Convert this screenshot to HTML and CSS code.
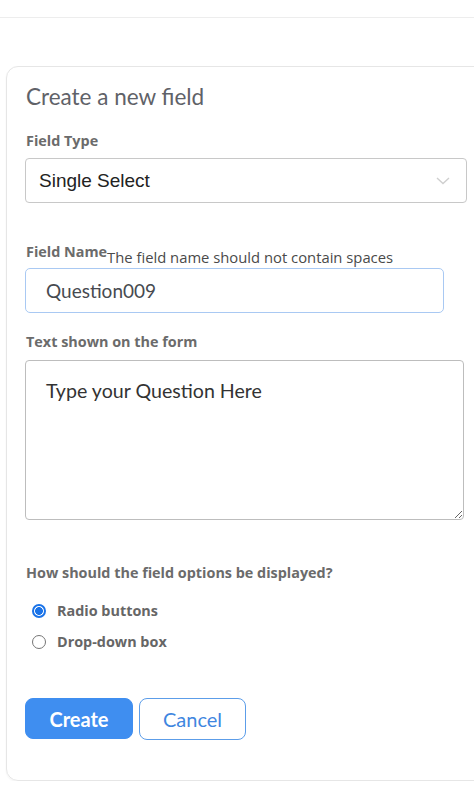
FILE: index.html
```html
<!DOCTYPE html>
<html lang="en">
<head>
<meta charset="utf-8">
<title>Create a new field</title>
<link rel="stylesheet" href="styles.css">
</head>
<body>
<div class="topbar"></div>
<div class="card">
  <h2 class="title">Create a new field</h2>

  <div class="label first">Field Type</div>
  <div class="select">
    <span class="select-value">Single Select</span>
    <svg class="chevron" width="14" height="8" viewBox="0 0 14 8"><path d="M1 1 L7 6.5 L13 1" fill="none" stroke="#cfcfcf" stroke-width="1.4"/></svg>
  </div>

  <div class="name-row">
    <span class="label">Field Name</span><span class="hint">The field name should not contain spaces</span>
  </div>
  <input class="text-input" type="text" value="Question009">

  <div class="label text-label">Text shown on the form</div>
  <textarea class="textarea">Type your Question Here</textarea>

  <div class="label display-label">How should the field options be displayed?</div>
  <div class="radios">
    <div class="radio-row"><span class="radio checked"></span><span class="radio-text">Radio buttons</span></div>
    <div class="radio-row"><span class="radio"></span><span class="radio-text">Drop-down box</span></div>
  </div>

  <div class="actions">
    <button class="btn btn-primary">Create</button>
    <button class="btn btn-outline">Cancel</button>
  </div>
</div>
</body>
</html>
```

FILE: styles.css
```css
* { box-sizing: border-box; }
html, body { margin: 0; padding: 0; background: #fff; }
body {
  font-family: "Open Sans", Lato, sans-serif;
  color: #333;
  width: 474px;
  overflow: hidden;
}
.topbar {
  height: 18px;
  border-bottom: 1px solid #ededed;
}
.card {
  margin: 48px 0 0 6px;
  width: 490px;
  border: 1px solid #e6e6e6;
  border-radius: 12px;
  padding: 17px 18px 40px 18px;
  box-shadow: 0 1px 2px rgba(0,0,0,0.05);
}
.title {
  margin: 0;
  font-family: Lato, "Open Sans", sans-serif;
  font-size: 22.5px;
  line-height: 26px;
  font-weight: 400;
  color: #5f6268;
  padding-left: 1px;
}
.label {
  font-size: 14.4px;
  line-height: 18px;
  font-weight: 700;
  color: #6b6b6b;
  padding-left: 1px;
}
.label.first { margin-top: 22px; }
.select {
  margin-top: 8px;
  width: 442px;
  height: 45px;
  border: 1px solid #c8c8c8;
  border-radius: 4px;
  display: flex;
  align-items: center;
  justify-content: space-between;
  padding: 0 16px 0 13px;
}
.select-value {
  font-family: "Liberation Sans", Arial, sans-serif;
  font-size: 19px;
  color: #222;
}
.chevron { display: block; }
.name-row {
  margin-top: 40px;
  display: flex;
  align-items: flex-start;
  height: 23px;
}
.name-row .label { padding-left: 1px; }
.hint {
  padding-top: 5px;
  font-size: 14.8px;
  line-height: 18px;
  font-weight: 500;
  color: #4a4a4a;
}
.text-input {
  display: block;
  margin-top: 2px;
  width: 419px;
  height: 45px;
  border: 1px solid #a9c9f3;
  border-radius: 5px;
  padding: 0 0 0 20px;
  font-family: Lato, "Open Sans", sans-serif;
  font-size: 19px;
  color: #474a50;
  outline: none;
  background: #fff;
}
.text-label { margin-top: 20px; }
.textarea {
  display: block;
  margin-top: 9px;
  width: 439px;
  height: 160px;
  border: 1px solid #bdbdbd;
  border-radius: 4px;
  padding: 18px 20px;
  font-family: Lato, "Open Sans", sans-serif;
  font-size: 19.6px;
  line-height: 24px;
  color: #333;
  resize: both;
  outline: none;
}
.display-label { margin-top: 44px; }
.radios { margin-top: 13px; }
.radio-row {
  height: 31px;
  display: flex;
  align-items: center;
  padding-left: 7px;
}
.radio {
  width: 14px;
  height: 14px;
  border-radius: 50%;
  border: 1px solid #767676;
  margin-right: 11px;
  flex: none;
}
.radio.checked {
  border: 2px solid #1a73e8;
  background: radial-gradient(circle, #1a73e8 0 3.6px, #fff 4.2px);
}
.radio-text {
  font-size: 14.4px;
  font-weight: 700;
  color: #666;
}
.actions {
  margin-top: 41px;
  display: flex;
  gap: 6px;
}
.btn {
  height: 41px;
  border-radius: 8px;
  font-family: Lato, "Open Sans", sans-serif;
  font-size: 20px;
  padding: 0;
  cursor: pointer;
}
.btn-primary {
  width: 108px;
  background: #3f8ef0;
  border: 1px solid #3f8ef0;
  color: #fff;
  font-weight: 700;
}
.btn-outline {
  width: 107px;
  height: 42px;
  background: #fff;
  border: 1px solid #5c9de9;
  color: #3f86e0;
  font-weight: 400;
}
```
